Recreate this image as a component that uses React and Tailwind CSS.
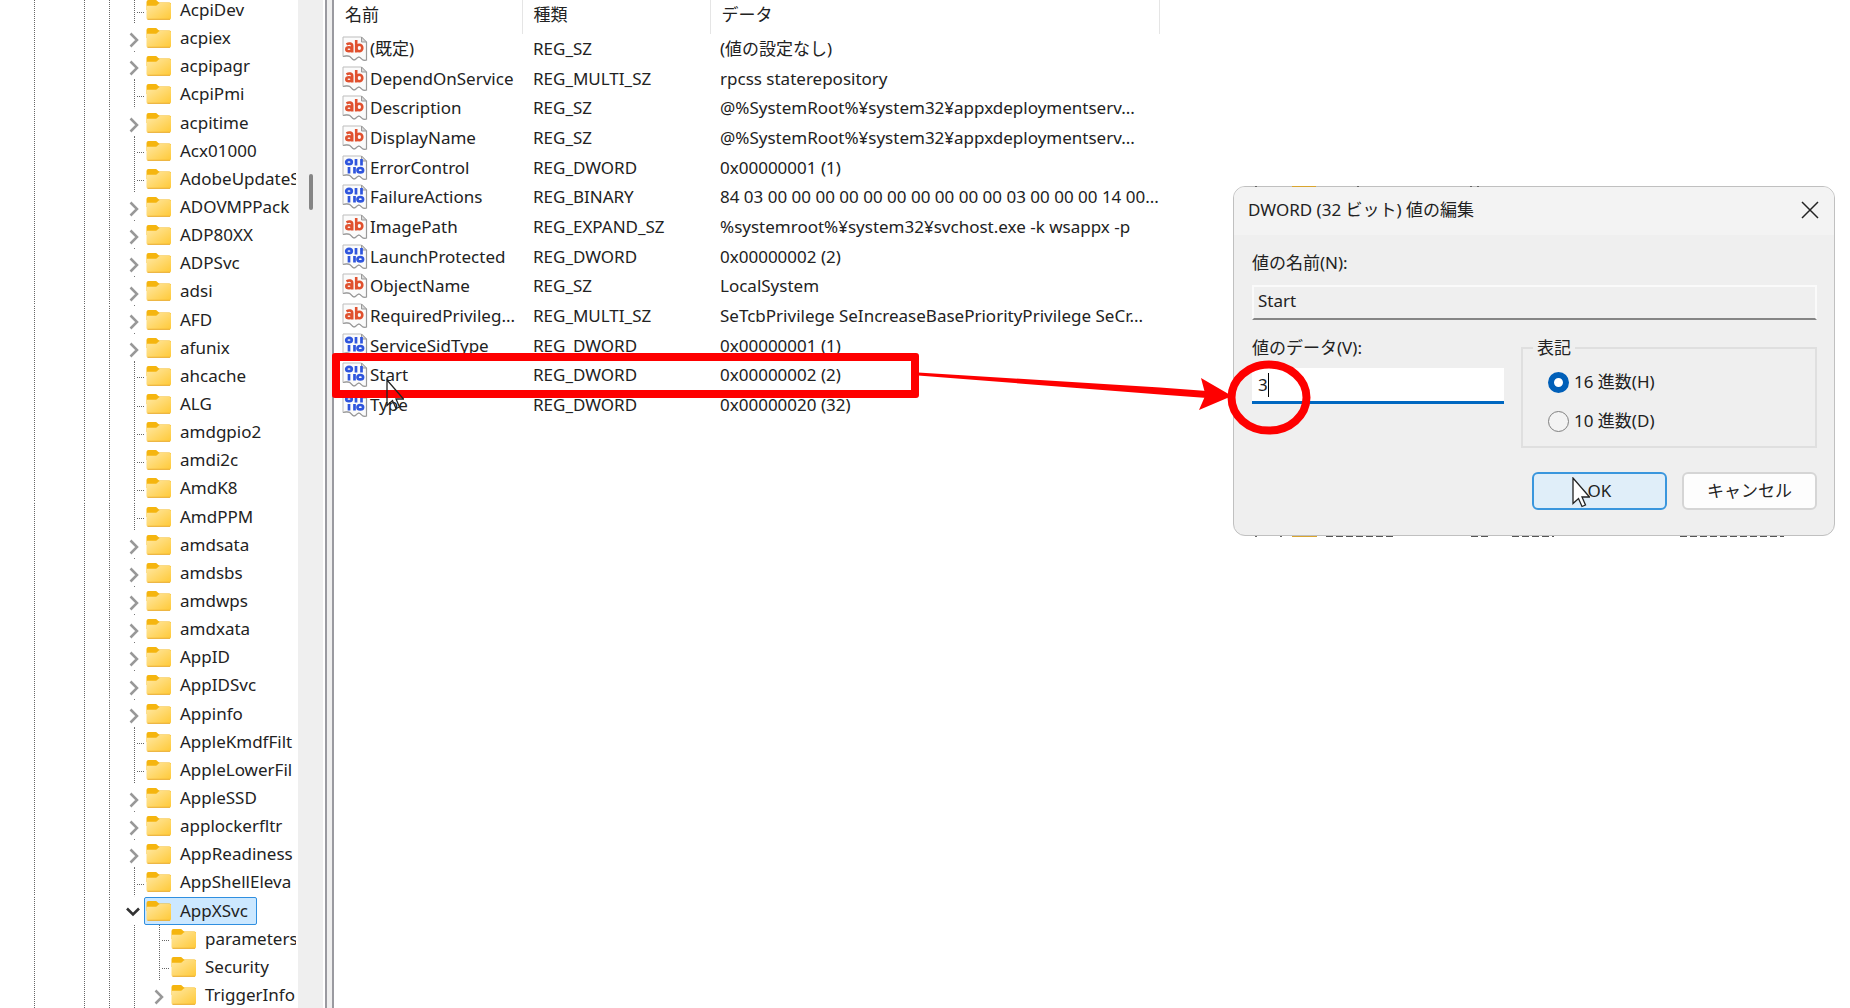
const TREE = [
  { name: 'AcpiDev' },
  { name: 'acpiex', expandable: true },
  { name: 'acpipagr', expandable: true },
  { name: 'AcpiPmi' },
  { name: 'acpitime', expandable: true },
  { name: 'Acx01000' },
  { name: 'AdobeUpdateS' },
  { name: 'ADOVMPPack', expandable: true },
  { name: 'ADP80XX', expandable: true },
  { name: 'ADPSvc', expandable: true },
  { name: 'adsi', expandable: true },
  { name: 'AFD', expandable: true },
  { name: 'afunix', expandable: true },
  { name: 'ahcache' },
  { name: 'ALG' },
  { name: 'amdgpio2' },
  { name: 'amdi2c' },
  { name: 'AmdK8' },
  { name: 'AmdPPM' },
  { name: 'amdsata', expandable: true },
  { name: 'amdsbs', expandable: true },
  { name: 'amdwps', expandable: true },
  { name: 'amdxata', expandable: true },
  { name: 'AppID', expandable: true },
  { name: 'AppIDSvc', expandable: true },
  { name: 'Appinfo', expandable: true },
  { name: 'AppleKmdfFilt' },
  { name: 'AppleLowerFil' },
  { name: 'AppleSSD', expandable: true },
  { name: 'applockerfltr', expandable: true },
  { name: 'AppReadiness', expandable: true },
  { name: 'AppShellEleva' },
  { name: 'AppXSvc', open: true },
  { name: 'parameters', child: true },
  { name: 'Security', child: true },
  { name: 'TriggerInfo', child: true, expandable: true },
];

const VALUES = [
  ['sz', '(既定)', 'REG_SZ', '(値の設定なし)'],
  ['sz', 'DependOnService', 'REG_MULTI_SZ', 'rpcss staterepository'],
  ['sz', 'Description', 'REG_SZ', '@%SystemRoot%¥system32¥appxdeploymentserv...'],
  ['sz', 'DisplayName', 'REG_SZ', '@%SystemRoot%¥system32¥appxdeploymentserv...'],
  ['bin', 'ErrorControl', 'REG_DWORD', '0x00000001 (1)'],
  ['bin', 'FailureActions', 'REG_BINARY', '84 03 00 00 00 00 00 00 00 00 00 00 03 00 00 00 14 00...'],
  ['sz', 'ImagePath', 'REG_EXPAND_SZ', '%systemroot%¥system32¥svchost.exe -k wsappx -p'],
  ['bin', 'LaunchProtected', 'REG_DWORD', '0x00000002 (2)'],
  ['sz', 'ObjectName', 'REG_SZ', 'LocalSystem'],
  ['sz', 'RequiredPrivileg...', 'REG_MULTI_SZ', 'SeTcbPrivilege SeIncreaseBasePriorityPrivilege SeCr...'],
  ['bin', 'ServiceSidType', 'REG_DWORD', '0x00000001 (1)'],
  ['bin', 'Start', 'REG_DWORD', '0x00000002 (2)'],
  ['bin', 'Type', 'REG_DWORD', '0x00000020 (32)'],
];

function FolderIcon() {
  return (
    <svg width="26" height="22" viewBox="0 0 26 22" className="shrink-0">
      <defs>
        <linearGradient id="folder" x1="0" y1="0" x2="1" y2="1">
          <stop offset="0" stopColor="#ffe8a3" />
          <stop offset="1" stopColor="#ffc937" />
        </linearGradient>
      </defs>
      <path d="M0.500 3a2 2 0 0 1 2-2h7.500c1.200 0 1.800 2.500 3.500 2.500h10a1.500 1.500 0 0 1 1.500 1.500v6H0.500z" fill="#f5b50f" />
      <path d="M0.500 8c0-.8.500-1.300 1.500-1.300h8c1.600 0 2.200-2.600 4-2.600h9.500a1.500 1.500 0 0 1 1.500 1.500V19a1.500 1.500 0 0 1-1.500 1.500h-21.500a1.500 1.500 0 0 1-1.500-1.500z" fill="url(#folder)" />
      <path d="M1.500 20.300h22.500" stroke="#e9ab2c" strokeWidth="1" />
    </svg>
  );
}

function ValueIcon({ kind }) {
  return (
    <svg width="26" height="26" viewBox="0 0 26 26" className="shrink-0">
      <path
        d="M1 20.500V1h18.500l5 5v18c-2 .8-3.500.5-5-1.200-2-2.300-3.500-2-5-.3-1.800 2-3.500 1.800-5-.4-1.500-2.300-4-2.800-8.500-1.600z"
        fill="#fbfbfb"
        stroke="#bdbdbd"
      />
      <path d="M24.500 6v18c-2 .8-3.500.5-5-1.200-2-2.300-3.500-2-5-.3-1.800 2-3.500 1.800-5-.4-1.500-2.300-4-2.800-8.500-1.600" fill="none" stroke="#9a9a9a" strokeWidth="1.200" />
      <path d="M19.500 1v5h5z" fill="#d9d9d9" stroke="#9a9a9a" />
      {kind === 'sz' ? (
        <g fill="none" stroke="#e0512f" strokeWidth="2.600">
          <path d="M4.500 8.300c2.500-1.300 5.700-1 5.700 1.600v6.600" />
          <ellipse cx="7" cy="13.300" rx="2.700" ry="2" />
          <path d="M14.200 4v12.500" />
          <ellipse cx="17.300" cy="12" rx="3" ry="3.300" />
        </g>
      ) : (
        <g fill="none" stroke="#2f55dd" strokeWidth="2.700">
          <ellipse cx="7" cy="7" rx="2.800" ry="2.200" />
          <path d="M14 4v6.500M19.500 4v6.500M7 12v6.500M12.500 12v6.500" />
          <ellipse cx="18.300" cy="15.200" rx="2.800" ry="2.200" />
        </g>
      )}
    </svg>
  );
}

function Cursor({ fill, className }) {
  return (
    <svg width="18" height="32" viewBox="0 0 18 32" className={className}>
      <path d="M1 1v25.500l5.500-5 3.500 8 3.500-1.500-3.500-8h7.500z" fill={fill} stroke="#222" strokeWidth="1.300" />
    </svg>
  );
}

function Guide() {
  return (
    <svg width="1" className="h-full shrink-0">
      <line x1="0.500" y1="0" x2="0.500" y2="100%" stroke="#666" strokeDasharray="1 1" />
    </svg>
  );
}

function Branch({ item }) {
  if (item.expandable) {
    return (
      <span className="flex w-6 shrink-0 flex-col justify-end self-stretch">
        <svg width="12" height="16" viewBox="0 0 12 16" className="mb-[3px] ml-[2px]">
          <path d="M2.500 1.500 9 8l-6.500 6.500" fill="none" stroke="#989898" strokeWidth="2.500" />
        </svg>
        <span className="ml-2 size-px bg-[#777]" />
      </span>
    );
  }
  if (item.open) {
    return (
      <span className="flex w-6 shrink-0">
        <svg width="14" height="10" viewBox="0 0 14 10" className="mt-[2px]">
          <path d="M1 1.500 7 7.500l6-6" fill="none" stroke="#333" strokeWidth="2.600" />
        </svg>
      </span>
    );
  }
  return (
    <span className="flex w-6 shrink-0 items-center self-stretch pl-2">
      <Guide />
      <svg width="8" height="1" className="mt-1 ml-[2px]">
        <line x1="0" y1="0.500" x2="8" y2="0.500" stroke="#666" strokeDasharray="1 1" />
      </svg>
    </span>
  );
}

function TreeItem({ item }) {
  return (
    <li className="flex min-h-0 flex-1 items-center whitespace-nowrap">
      <span className="flex h-full w-[126px] shrink-0">
        <span className="w-[34px]" />
        <Guide />
        <span className="w-[49px]" />
        <Guide />
        <span className="w-6" />
        <Guide />
      </span>
      {item.child && (
        <span className="flex h-full w-[25px] shrink-0 pl-2">
          <Guide />
        </span>
      )}
      <Branch item={item} />
      <span
        className={
          item.open
            ? '-ml-[6px] flex h-full items-center rounded-[2px] border border-[#2f8fe0] bg-[#cce8ff] pr-2 pl-[1px]'
            : '-ml-[4px] flex h-full items-center'
        }
      >
        <FolderIcon />
        <span className="pl-2">{item.name}</span>
      </span>
    </li>
  );
}

function Tree() {
  return (
    <nav className="flex h-full w-[298px] shrink-0 overflow-hidden pr-[2px]">
      <ul className="-mt-1 -mb-px flex min-w-0 flex-1 flex-col overflow-hidden">
        {TREE.map((item) => (
          <TreeItem key={item.name} item={item} />
        ))}
      </ul>
    </nav>
  );
}

function ValueTable() {
  return (
    <table className="h-[420px] w-[826px] table-fixed border-collapse text-left">
      <colgroup>
        <col className="w-[188px]" />
        <col className="w-[188px]" />
        <col />
      </colgroup>
      <thead>
        <tr className="h-[34px]">
          {['名前', '種類', 'データ'].map((h) => (
            <th key={h} className="border-r border-[#e5e5e5] pb-1 pl-[11px] font-normal">
              {h}
            </th>
          ))}
        </tr>
      </thead>
      <tbody>
        {VALUES.map(([kind, name, type, data]) => (
          <tr key={name} className="h-[29px] whitespace-nowrap">
            <td className="pl-2">
              <span className="flex items-center gap-[2px]">
                <ValueIcon kind={kind} />
                {name}
              </span>
            </td>
            <td className="pl-[11px]">{type}</td>
            <td className="pl-[10px]">{data}</td>
          </tr>
        ))}
      </tbody>
    </table>
  );
}

function Radio({ label, ...props }) {
  return (
    <label className="flex items-center gap-[5px]">
      <input
        type="radio"
        name="base"
        className="size-[21px] appearance-none rounded-full border border-[#808080] bg-[#f3f3f3] checked:border-[6px] checked:border-[#005fb8] checked:bg-white"
        {...props}
      />
      {label}
    </label>
  );
}

function EditDialog() {
  return (
    <form className="absolute top-[186px] right-[15px] w-[602px] overflow-hidden rounded-xl border border-[#c0c0c0] bg-[#efefef]">
      <header className="flex h-12 items-center justify-between bg-[#f3f3f3] pr-[15px] pb-[2px] pl-[14px]">
        <h2>DWORD (32 ビット) 値の編集</h2>
        <button type="button" aria-label="閉じる">
          <svg width="18" height="18" viewBox="0 0 18 18">
            <path d="M1 1l16 16M17 1L1 17" stroke="#222" strokeWidth="1.500" />
          </svg>
        </button>
      </header>
      <div className="pt-4 pr-[17px] pb-[25px] pl-[18px]">
        <label htmlFor="value-name" className="block h-[34px] leading-6">
          値の名前(N):
        </label>
        <input
          id="value-name"
          readOnly
          defaultValue="Start"
          className="block h-[35px] w-full border-2 border-[#fafafa] border-b-[#858585] bg-[#efefef] px-1 pb-1 outline-none"
        />
        <div className="mt-4 flex justify-between">
          <div className="w-[252px]">
            <label htmlFor="value-data" className="block h-8 leading-6">
              値のデータ(V):
            </label>
            <div className="flex h-9 items-center border-b-[3px] border-[#0067c0] bg-white pl-[6px]">
              <input id="value-data" defaultValue="3" className="w-[10px] outline-none" />
              <span className="h-6 w-px bg-black" />
            </div>
          </div>
          <fieldset className="h-[112px] w-[296px] border-2 border-[#dfdfdf] pl-[25px]">
            <legend className="-ml-[15px] px-[4px] leading-6">表記</legend>
            <div className="flex flex-col gap-[15px] pt-[10px]">
              <Radio label="16 進数(H)" defaultChecked />
              <Radio label="10 進数(D)" />
            </div>
          </fieldset>
        </div>
        <div className="mt-6 flex justify-end gap-[15px]">
          <button type="button" className="h-[38px] w-[135px] rounded-md border-2 border-[#3a96dd] bg-[#e0eef9]">
            OK
          </button>
          <button type="button" className="h-[38px] w-[135px] rounded-md border-2 border-[#d5d5d5] bg-[#fdfdfd]">
            キャンセル
          </button>
        </div>
      </div>
      <Cursor fill="#fff" className="absolute top-[290px] right-[244px]" />
    </form>
  );
}

// Slivers of the window behind the dialog, showing along its top and bottom edges
function DialogEdges() {
  return (
    <svg className="absolute top-[185px] right-[15px]" width="602" height="354" viewBox="0 0 602 354" fill="none" strokeWidth="1">
      <path d="M59 1.500h24M59 351.500h25" stroke="#d9a52f" />
      <path d="M22 1.500h2M124 1.500h2M237 1.500h2M244 1.500h2" stroke="#666" />
      <path d="M22 351.500h2M47 351.500h2" stroke="#666" />
      <path d="M93 351.500h68M238 351.500h18M279 351.500h42M447 351.500h104" stroke="#555" strokeDasharray="7 3" />
    </svg>
  );
}

function Annotations() {
  return (
    <>
      <div className="absolute top-[353px] left-[332px] h-[45px] w-[587px] rounded-[3px] border-8 border-[#fe0000]" />
      <svg className="absolute top-[350px] right-[535px]" width="400" height="100" viewBox="0 0 400 100">
        <path d="M3 22.500 245 37.500 292 41v7l-47-3.500L3 25.500z" fill="#fe0000" />
        <path d="M317 46 286 28l4.500 17-6.500 15z" fill="#fe0000" />
        <ellipse cx="354" cy="47.600" rx="37.500" ry="33" fill="none" stroke="#fe0000" strokeWidth="8" />
      </svg>
    </>
  );
}

export default function App() {
  return (
    <main className="relative flex h-screen overflow-hidden bg-white font-['Noto_Sans','Noto_Sans_CJK_JP',sans-serif] text-[17px] leading-6 text-[#222]">
      <Tree />
      <div className="flex w-[25px] shrink-0 justify-center bg-[#efefef]">
        <span className="mt-[174px] h-9 w-1 rounded-full bg-[#858585]" />
      </div>
      <div className="ml-[2px] w-[9px] shrink-0 border-x-2 border-[#9a9aa0] bg-[#efefef]" />
      <section className="min-w-0 flex-1">
        <ValueTable />
      </section>
      <EditDialog />
      <DialogEdges />
      <Annotations />
      <Cursor fill="none" className="absolute top-[379px] left-[386px]" />
    </main>
  );
}
